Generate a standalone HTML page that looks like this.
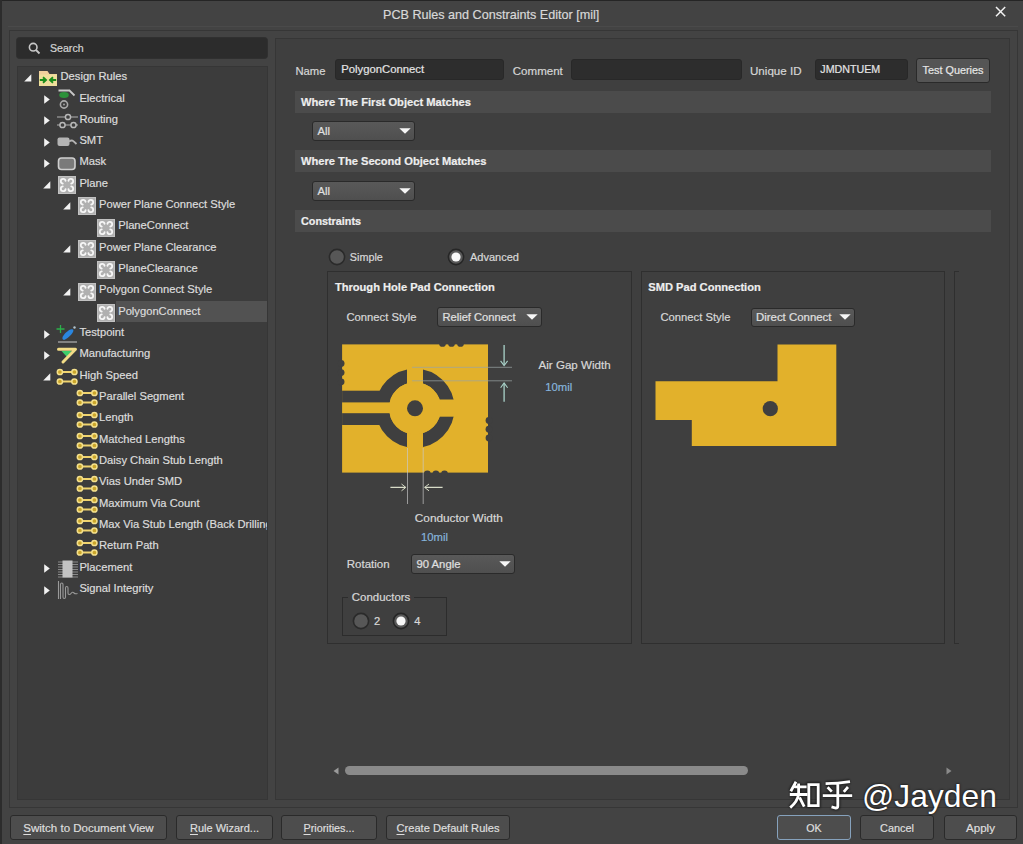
<!DOCTYPE html><html><head><meta charset="utf-8"><style>
*{box-sizing:border-box}
html,body{margin:0;padding:0}
body{width:1023px;height:844px;overflow:hidden;position:relative;background:#434343;font-family:"Liberation Sans",sans-serif;font-size:11.2px;color:#dcdcdc}
.a{position:absolute}
.t{position:absolute;white-space:nowrap;line-height:14px;-webkit-text-stroke:0.2px currentColor}
.inp{position:absolute;background:#2d2d2d;border:1px solid #282828;border-radius:3px}
.hdr{position:absolute;background:#4b4b4b}
.dd{position:absolute;border:1px solid #2a2a2a;border-radius:3px;background:linear-gradient(#595959,#4f4f4f)}
.btn{position:absolute;border:1px solid #2a2a2a;border-radius:3px;background:#4d4d4d}
svg{position:absolute;overflow:visible}
</style></head><body>
<div class="a" style="left:0;top:0;width:1023px;height:1px;background:#252525"></div>
<div class="a" style="left:0;top:0;width:2px;height:844px;background:#2c2c2c"></div>
<div class="t" style="left:383.00px;top:7.97px;font-size:12.6px;color:#d8d8d8;">PCB Rules and Constraints Editor [mil]</div>
<svg style="left:994.5px;top:5.5px" width="11" height="11" viewBox="0 0 11 11"><path d="M1 1L10.2 10.2M10.2 1L1 10.2" stroke="#f2f2f2" stroke-width="1.5"/></svg>
<div class="a" style="left:8px;top:26px;width:1010px;height:1px;background:#4a4a4a"></div>
<div class="a" style="left:9px;top:30px;width:1009px;height:778px;border:1px solid #363636"></div>
<div class="a" style="left:17px;top:38px;width:250px;height:20px;background:#2c2c2c;border-radius:3px;box-shadow:0 0 0 1px #303030"></div>
<svg style="left:28px;top:42px" width="13" height="13" viewBox="0 0 13 13"><circle cx="5.2" cy="5.2" r="3.8" fill="none" stroke="#c8c8c8" stroke-width="1.6"/><path d="M8 8L11.5 11.5" stroke="#c8c8c8" stroke-width="1.8"/></svg>
<div class="t" style="left:50.00px;top:40.97px;font-size:10.6px;color:#d4d4d4;">Search</div>
<div class="a" style="left:17px;top:66px;width:251px;height:734px;background:#3c3c3c;border:1px solid #363636"></div>
<div class="a" style="left:18px;top:67px;width:249px;height:732px;overflow:hidden">
<svg style="left:6.00px;top:7.20px" width="8" height="8" viewBox="0 0 8 8"><path d="M7.3 0.2V7.6H0.2z" fill="#f2f2f2"/></svg>
<svg style="left:20.30px;top:1.50px" width="20" height="20" viewBox="0 0 20 20"><path d="M1 2h8.5l2 3H19v12H1z" fill="#f0cf9c"/><path d="M1 5.5h18v11.5H1z" fill="#efdf9c"/><path d="M1.8 11h5.5M5 8.3l3 2.7-3 2.7M18.2 11h-5.5M15 8.3l-3 2.7 3 2.7" stroke="#1a8c1a" stroke-width="1.9" fill="none"/></svg>
<div class="t" style="left:42.50px;top:2.17px">Design Rules</div>
<svg style="left:25.90px;top:28.03px" width="6" height="9" viewBox="0 0 6 9"><path d="M0.2 0.2L5.8 4.5L0.2 8.8z" fill="#f2f2f2"/></svg>
<svg style="left:38.80px;top:22.83px" width="20" height="20" viewBox="0 0 20 20"><path d="M1.5 0.5h11l5 5" stroke="#c8c8c8" stroke-width="1.8" fill="none"/><ellipse cx="7" cy="5" rx="4.8" ry="3" fill="#2a9a3a" opacity="0.9"/><circle cx="7" cy="14.5" r="3.6" fill="none" stroke="#a8a8a8" stroke-width="1.6"/><circle cx="7" cy="14.5" r="0.9" fill="#a8a8a8"/></svg>
<div class="t" style="left:61.40px;top:23.50px">Electrical</div>
<svg style="left:25.90px;top:49.36px" width="6" height="9" viewBox="0 0 6 9"><path d="M0.2 0.2L5.8 4.5L0.2 8.8z" fill="#f2f2f2"/></svg>
<svg style="left:38.80px;top:44.16px" width="20" height="20" viewBox="0 0 20 20"><path d="M0 6h21M0 14h21" stroke="#b0b0b0" stroke-width="1.2"/><circle cx="11" cy="6" r="2.6" fill="#3c3c3c" stroke="#b8b8b8" stroke-width="1.5"/><circle cx="5.5" cy="14" r="2.6" fill="#3c3c3c" stroke="#b8b8b8" stroke-width="1.5"/><circle cx="16.5" cy="14" r="2.6" fill="#3c3c3c" stroke="#b8b8b8" stroke-width="1.5"/></svg>
<div class="t" style="left:61.40px;top:44.83px">Routing</div>
<svg style="left:25.90px;top:70.69px" width="6" height="9" viewBox="0 0 6 9"><path d="M0.2 0.2L5.8 4.5L0.2 8.8z" fill="#f2f2f2"/></svg>
<svg style="left:38.80px;top:65.49px" width="20" height="20" viewBox="0 0 20 20"><rect x="0.5" y="5.5" width="12" height="8.5" rx="2" fill="#b4b4b4"/><path d="M12 9.5c3 -2 4 -1 7.5 2.5" stroke="#b4b4b4" stroke-width="1.8" fill="none"/></svg>
<div class="t" style="left:61.40px;top:66.16px">SMT</div>
<svg style="left:25.90px;top:92.02px" width="6" height="9" viewBox="0 0 6 9"><path d="M0.2 0.2L5.8 4.5L0.2 8.8z" fill="#f2f2f2"/></svg>
<svg style="left:38.80px;top:86.82px" width="20" height="20" viewBox="0 0 20 20"><rect x="1.5" y="4" width="16.5" height="11.5" rx="3" fill="#7a7a7a" stroke="#cfcfcf" stroke-width="1.6"/></svg>
<div class="t" style="left:61.40px;top:87.49px">Mask</div>
<svg style="left:24.90px;top:113.85px" width="8" height="8" viewBox="0 0 8 8"><path d="M7.3 0.2V7.6H0.2z" fill="#f2f2f2"/></svg>
<svg style="left:38.80px;top:108.15px" width="20" height="20" viewBox="0 0 20 20"><rect x="1" y="1" width="18" height="18" fill="#b0b0b0"/><rect x="1.5" y="1.5" width="17" height="17" fill="none" stroke="#c2c2c2" stroke-width="1"/><path d="M5.78 8.56A2.4 2.4 0 1 1 8.56 5.78M8.56 14.22A2.4 2.4 0 1 1 5.78 11.44M11.44 5.78A2.4 2.4 0 1 1 14.22 8.56M14.22 11.44A2.4 2.4 0 1 1 11.44 14.22" stroke="#f6f6f6" stroke-width="1.8" fill="none" stroke-linecap="round"/></svg>
<div class="t" style="left:61.40px;top:108.82px">Plane</div>
<svg style="left:44.50px;top:135.18px" width="8" height="8" viewBox="0 0 8 8"><path d="M7.3 0.2V7.6H0.2z" fill="#f2f2f2"/></svg>
<svg style="left:58.80px;top:129.48px" width="20" height="20" viewBox="0 0 20 20"><rect x="1" y="1" width="18" height="18" fill="#b0b0b0"/><rect x="1.5" y="1.5" width="17" height="17" fill="none" stroke="#c2c2c2" stroke-width="1"/><path d="M5.78 8.56A2.4 2.4 0 1 1 8.56 5.78M8.56 14.22A2.4 2.4 0 1 1 5.78 11.44M11.44 5.78A2.4 2.4 0 1 1 14.22 8.56M14.22 11.44A2.4 2.4 0 1 1 11.44 14.22" stroke="#f6f6f6" stroke-width="1.8" fill="none" stroke-linecap="round"/></svg>
<div class="t" style="left:81.00px;top:130.15px">Power Plane Connect Style</div>
<svg style="left:78.00px;top:150.81px" width="20" height="20" viewBox="0 0 20 20"><rect x="1" y="1" width="18" height="18" fill="#b0b0b0"/><rect x="1.5" y="1.5" width="17" height="17" fill="none" stroke="#c2c2c2" stroke-width="1"/><path d="M5.78 8.56A2.4 2.4 0 1 1 8.56 5.78M8.56 14.22A2.4 2.4 0 1 1 5.78 11.44M11.44 5.78A2.4 2.4 0 1 1 14.22 8.56M14.22 11.44A2.4 2.4 0 1 1 11.44 14.22" stroke="#f6f6f6" stroke-width="1.8" fill="none" stroke-linecap="round"/></svg>
<div class="t" style="left:100.20px;top:151.48px">PlaneConnect</div>
<svg style="left:44.50px;top:177.84px" width="8" height="8" viewBox="0 0 8 8"><path d="M7.3 0.2V7.6H0.2z" fill="#f2f2f2"/></svg>
<svg style="left:58.80px;top:172.14px" width="20" height="20" viewBox="0 0 20 20"><rect x="1" y="1" width="18" height="18" fill="#b0b0b0"/><rect x="1.5" y="1.5" width="17" height="17" fill="none" stroke="#c2c2c2" stroke-width="1"/><path d="M5.78 8.56A2.4 2.4 0 1 1 8.56 5.78M8.56 14.22A2.4 2.4 0 1 1 5.78 11.44M11.44 5.78A2.4 2.4 0 1 1 14.22 8.56M14.22 11.44A2.4 2.4 0 1 1 11.44 14.22" stroke="#f6f6f6" stroke-width="1.8" fill="none" stroke-linecap="round"/></svg>
<div class="t" style="left:81.00px;top:172.81px">Power Plane Clearance</div>
<svg style="left:78.00px;top:193.47px" width="20" height="20" viewBox="0 0 20 20"><rect x="1" y="1" width="18" height="18" fill="#b0b0b0"/><rect x="1.5" y="1.5" width="17" height="17" fill="none" stroke="#c2c2c2" stroke-width="1"/><path d="M5.78 8.56A2.4 2.4 0 1 1 8.56 5.78M8.56 14.22A2.4 2.4 0 1 1 5.78 11.44M11.44 5.78A2.4 2.4 0 1 1 14.22 8.56M14.22 11.44A2.4 2.4 0 1 1 11.44 14.22" stroke="#f6f6f6" stroke-width="1.8" fill="none" stroke-linecap="round"/></svg>
<div class="t" style="left:100.20px;top:194.14px">PlaneClearance</div>
<svg style="left:44.50px;top:220.50px" width="8" height="8" viewBox="0 0 8 8"><path d="M7.3 0.2V7.6H0.2z" fill="#f2f2f2"/></svg>
<svg style="left:58.80px;top:214.80px" width="20" height="20" viewBox="0 0 20 20"><rect x="1" y="1" width="18" height="18" fill="#b0b0b0"/><rect x="1.5" y="1.5" width="17" height="17" fill="none" stroke="#c2c2c2" stroke-width="1"/><path d="M5.78 8.56A2.4 2.4 0 1 1 8.56 5.78M8.56 14.22A2.4 2.4 0 1 1 5.78 11.44M11.44 5.78A2.4 2.4 0 1 1 14.22 8.56M14.22 11.44A2.4 2.4 0 1 1 11.44 14.22" stroke="#f6f6f6" stroke-width="1.8" fill="none" stroke-linecap="round"/></svg>
<div class="t" style="left:81.00px;top:215.47px">Polygon Connect Style</div>
<div class="a" style="left:98px;top:233.83px;width:160px;height:21.5px;background:#525252"></div>
<svg style="left:78.00px;top:236.13px" width="20" height="20" viewBox="0 0 20 20"><rect x="1" y="1" width="18" height="18" fill="#b0b0b0"/><rect x="1.5" y="1.5" width="17" height="17" fill="none" stroke="#c2c2c2" stroke-width="1"/><path d="M5.78 8.56A2.4 2.4 0 1 1 8.56 5.78M8.56 14.22A2.4 2.4 0 1 1 5.78 11.44M11.44 5.78A2.4 2.4 0 1 1 14.22 8.56M14.22 11.44A2.4 2.4 0 1 1 11.44 14.22" stroke="#f6f6f6" stroke-width="1.8" fill="none" stroke-linecap="round"/></svg>
<div class="t" style="left:100.20px;top:236.80px">PolygonConnect</div>
<svg style="left:25.90px;top:262.66px" width="6" height="9" viewBox="0 0 6 9"><path d="M0.2 0.2L5.8 4.5L0.2 8.8z" fill="#f2f2f2"/></svg>
<svg style="left:38.80px;top:257.46px" width="20" height="20" viewBox="0 0 20 20"><path d="M3.5 1v8M-0.5 5h8" stroke="#2bb04a" stroke-width="1.3"/><path d="M6 15.5c-1.5-1.5 0-4 3-7s5.5-4 7-3c1.2 1.3-0.5 4-3.5 6.8s-5.2 4.4-6.5 3.2z" fill="#2a86e0"/><circle cx="17.5" cy="3.5" r="1.2" fill="#b0c4d0"/><path d="M1 18h19" stroke="#9a9a9a" stroke-width="1.5"/></svg>
<div class="t" style="left:61.40px;top:258.13px">Testpoint</div>
<svg style="left:25.90px;top:283.99px" width="6" height="9" viewBox="0 0 6 9"><path d="M0.2 0.2L5.8 4.5L0.2 8.8z" fill="#f2f2f2"/></svg>
<svg style="left:38.80px;top:278.79px" width="20" height="20" viewBox="0 0 20 20"><path d="M4.5 5l10 0l-4.5 6z" fill="#3ecf6a"/><path d="M1.5 3.2h17l-12.5 12.8" stroke="#f2dc86" stroke-width="3" fill="none" stroke-linejoin="round" stroke-linecap="round"/></svg>
<div class="t" style="left:61.40px;top:279.46px">Manufacturing</div>
<svg style="left:24.90px;top:305.82px" width="8" height="8" viewBox="0 0 8 8"><path d="M7.3 0.2V7.6H0.2z" fill="#f2f2f2"/></svg>
<svg style="left:38.80px;top:300.12px" width="20" height="20" viewBox="0 0 20 20"><path d="M2.9 5h14.5M2.9 14.5h14.5" stroke="#f0d46e" stroke-width="2.2"/><g fill="#c9a52a" stroke="#f4e08c" stroke-width="1.5"><circle cx="2.9" cy="5" r="2.6"/><circle cx="17.4" cy="5" r="2.6"/><circle cx="2.9" cy="14.5" r="2.6"/><circle cx="17.4" cy="14.5" r="2.6"/></g></svg>
<div class="t" style="left:61.40px;top:300.79px">High Speed</div>
<svg style="left:58.80px;top:321.45px" width="20" height="20" viewBox="0 0 20 20"><path d="M2.9 5h14.5M2.9 14.5h14.5" stroke="#f0d46e" stroke-width="2.2"/><g fill="#c9a52a" stroke="#f4e08c" stroke-width="1.5"><circle cx="2.9" cy="5" r="2.6"/><circle cx="17.4" cy="5" r="2.6"/><circle cx="2.9" cy="14.5" r="2.6"/><circle cx="17.4" cy="14.5" r="2.6"/></g></svg>
<div class="t" style="left:81.00px;top:322.12px">Parallel Segment</div>
<svg style="left:58.80px;top:342.78px" width="20" height="20" viewBox="0 0 20 20"><path d="M2.9 5h14.5M2.9 14.5h14.5" stroke="#f0d46e" stroke-width="2.2"/><g fill="#c9a52a" stroke="#f4e08c" stroke-width="1.5"><circle cx="2.9" cy="5" r="2.6"/><circle cx="17.4" cy="5" r="2.6"/><circle cx="2.9" cy="14.5" r="2.6"/><circle cx="17.4" cy="14.5" r="2.6"/></g></svg>
<div class="t" style="left:81.00px;top:343.45px">Length</div>
<svg style="left:58.80px;top:364.11px" width="20" height="20" viewBox="0 0 20 20"><path d="M2.9 5h14.5M2.9 14.5h14.5" stroke="#f0d46e" stroke-width="2.2"/><g fill="#c9a52a" stroke="#f4e08c" stroke-width="1.5"><circle cx="2.9" cy="5" r="2.6"/><circle cx="17.4" cy="5" r="2.6"/><circle cx="2.9" cy="14.5" r="2.6"/><circle cx="17.4" cy="14.5" r="2.6"/></g></svg>
<div class="t" style="left:81.00px;top:364.78px">Matched Lengths</div>
<svg style="left:58.80px;top:385.44px" width="20" height="20" viewBox="0 0 20 20"><path d="M2.9 5h14.5M2.9 14.5h14.5" stroke="#f0d46e" stroke-width="2.2"/><g fill="#c9a52a" stroke="#f4e08c" stroke-width="1.5"><circle cx="2.9" cy="5" r="2.6"/><circle cx="17.4" cy="5" r="2.6"/><circle cx="2.9" cy="14.5" r="2.6"/><circle cx="17.4" cy="14.5" r="2.6"/></g></svg>
<div class="t" style="left:81.00px;top:386.11px">Daisy Chain Stub Length</div>
<svg style="left:58.80px;top:406.77px" width="20" height="20" viewBox="0 0 20 20"><path d="M2.9 5h14.5M2.9 14.5h14.5" stroke="#f0d46e" stroke-width="2.2"/><g fill="#c9a52a" stroke="#f4e08c" stroke-width="1.5"><circle cx="2.9" cy="5" r="2.6"/><circle cx="17.4" cy="5" r="2.6"/><circle cx="2.9" cy="14.5" r="2.6"/><circle cx="17.4" cy="14.5" r="2.6"/></g></svg>
<div class="t" style="left:81.00px;top:407.44px">Vias Under SMD</div>
<svg style="left:58.80px;top:428.10px" width="20" height="20" viewBox="0 0 20 20"><path d="M2.9 5h14.5M2.9 14.5h14.5" stroke="#f0d46e" stroke-width="2.2"/><g fill="#c9a52a" stroke="#f4e08c" stroke-width="1.5"><circle cx="2.9" cy="5" r="2.6"/><circle cx="17.4" cy="5" r="2.6"/><circle cx="2.9" cy="14.5" r="2.6"/><circle cx="17.4" cy="14.5" r="2.6"/></g></svg>
<div class="t" style="left:81.00px;top:428.77px">Maximum Via Count</div>
<svg style="left:58.80px;top:449.43px" width="20" height="20" viewBox="0 0 20 20"><path d="M2.9 5h14.5M2.9 14.5h14.5" stroke="#f0d46e" stroke-width="2.2"/><g fill="#c9a52a" stroke="#f4e08c" stroke-width="1.5"><circle cx="2.9" cy="5" r="2.6"/><circle cx="17.4" cy="5" r="2.6"/><circle cx="2.9" cy="14.5" r="2.6"/><circle cx="17.4" cy="14.5" r="2.6"/></g></svg>
<div class="t" style="left:81.00px;top:450.10px">Max Via Stub Length (Back Drilling)</div>
<svg style="left:58.80px;top:470.76px" width="20" height="20" viewBox="0 0 20 20"><path d="M2.9 5h14.5M2.9 14.5h14.5" stroke="#f0d46e" stroke-width="2.2"/><g fill="#c9a52a" stroke="#f4e08c" stroke-width="1.5"><circle cx="2.9" cy="5" r="2.6"/><circle cx="17.4" cy="5" r="2.6"/><circle cx="2.9" cy="14.5" r="2.6"/><circle cx="17.4" cy="14.5" r="2.6"/></g></svg>
<div class="t" style="left:81.00px;top:471.43px">Return Path</div>
<svg style="left:25.90px;top:497.29px" width="6" height="9" viewBox="0 0 6 9"><path d="M0.2 0.2L5.8 4.5L0.2 8.8z" fill="#f2f2f2"/></svg>
<svg style="left:38.80px;top:492.09px" width="20" height="20" viewBox="0 0 20 20"><path d="M1 3h20M1 5.5h20M1 8h20M1 10.5h20M1 13h20M1 15.5h20M1 18h20" stroke="#8a8a8a" stroke-width="1"/><rect x="5.5" y="1.5" width="10" height="17" fill="#c4c4c4"/></svg>
<div class="t" style="left:61.40px;top:492.76px">Placement</div>
<svg style="left:25.90px;top:518.62px" width="6" height="9" viewBox="0 0 6 9"><path d="M0.2 0.2L5.8 4.5L0.2 8.8z" fill="#f2f2f2"/></svg>
<svg style="left:38.80px;top:513.42px" width="20" height="20" viewBox="0 0 20 20"><path d="M1.5 19V1M3.5 19V4.5c0-2 2.5-2 2.5 0V17c0 2 2.5 2 2.5 0V8c0-2 2.5-2 2.5 0v5c0 2 2 2 3 0.5s2-1.5 3-0.5 2 1 3.5 0.5" stroke="#9a9a9a" stroke-width="1.1" fill="none"/></svg>
<div class="t" style="left:61.40px;top:514.09px">Signal Integrity</div>
</div>
<div class="a" style="left:275px;top:38px;width:735px;height:762px;background:#3f3f3f;border:1px solid #363636"></div>
<div class="t" style="left:295.40px;top:63.67px;font-size:11.25px;color:#d6d6d6;">Name</div>
<div class="inp" style="left:335px;top:59px;width:169px;height:21px"></div>
<div class="t" style="left:341.20px;top:61.97px;font-size:11.31px;color:#e4e4e4;">PolygonConnect</div>
<div class="t" style="left:512.80px;top:63.97px;font-size:11.54px;color:#d6d6d6;">Comment</div>
<div class="inp" style="left:571px;top:59px;width:171px;height:21px"></div>
<div class="t" style="left:750.00px;top:63.97px;font-size:11.6px;color:#d6d6d6;">Unique ID</div>
<div class="inp" style="left:815px;top:59px;width:93px;height:21px"></div>
<div class="t" style="left:820.30px;top:61.97px;font-size:10.69px;color:#e4e4e4;">JMDNTUEM</div>
<div class="btn" style="left:916px;top:58px;width:74px;height:25px;background:#555555;border-color:#2a2a2a"></div>
<div class="t" style="left:922.50px;top:62.97px;font-size:10.87px;color:#e6e6e6;">Test Queries</div>
<div class="hdr" style="left:295px;top:91px;width:696px;height:22px"></div>
<div class="t" style="left:301.00px;top:94.97px;font-size:11.17px;font-weight:bold;color:#eeeeee;">Where The First Object Matches</div>
<div class="dd" style="left:312px;top:121px;width:103px;height:20px"></div>
<div class="t" style="left:317.50px;top:123.67px;font-size:11.2px;color:#e0e0e0;">All</div>
<svg style="left:399px;top:127.80px" width="12" height="6" viewBox="0 0 12 6"><path d="M0.3 0.2H11.7L6 5.8z" fill="#f6f6f6"/></svg>
<div class="hdr" style="left:295px;top:150px;width:696px;height:22px"></div>
<div class="t" style="left:301.00px;top:153.97px;font-size:11.13px;font-weight:bold;color:#eeeeee;">Where The Second Object Matches</div>
<div class="dd" style="left:312px;top:181px;width:103px;height:20px"></div>
<div class="t" style="left:317.50px;top:183.67px;font-size:11.2px;color:#e0e0e0;">All</div>
<svg style="left:399px;top:187.80px" width="12" height="6" viewBox="0 0 12 6"><path d="M0.3 0.2H11.7L6 5.8z" fill="#f6f6f6"/></svg>
<div class="hdr" style="left:295px;top:210px;width:696px;height:22px"></div>
<div class="t" style="left:301.00px;top:213.97px;font-size:10.8px;font-weight:bold;color:#eeeeee;">Constraints</div>
<svg style="left:327.5px;top:247.5px" width="18" height="18" viewBox="0 0 18 18"><circle cx="9" cy="9" r="7.6" fill="#575757" stroke="#2a2a2a" stroke-width="1.6"/></svg>
<div class="t" style="left:349.80px;top:249.97px;font-size:10.8px;color:#d8d8d8;">Simple</div>
<svg style="left:447.2px;top:247.5px" width="18" height="18" viewBox="0 0 18 18"><circle cx="9" cy="9" r="7.6" fill="#5a5a5a" stroke="#262626" stroke-width="1.6"/><circle cx="9" cy="9" r="4.6" fill="#f8f8f8"/></svg>
<div class="t" style="left:470.00px;top:249.97px;font-size:11.02px;color:#d8d8d8;">Advanced</div>
<div class="a" style="left:327px;top:271px;width:305px;height:373px;border:1px solid #2f2f2f"></div>
<div class="a" style="left:640.5px;top:271px;width:304.5px;height:373px;border:1px solid #2f2f2f"></div>
<div class="a" style="left:953.5px;top:271px;width:5px;height:373px;border-left:1px solid #2f2f2f;border-top:1px solid #2f2f2f;border-bottom:1px solid #2f2f2f"></div>
<div class="t" style="left:334.90px;top:280.27px;font-size:11.12px;font-weight:bold;color:#eeeeee;">Through Hole Pad Connection</div>
<div class="t" style="left:346.50px;top:309.97px;font-size:11.24px;color:#d8d8d8;">Connect Style</div>
<div class="dd" style="left:437px;top:307px;width:105px;height:20px"></div>
<div class="t" style="left:442.50px;top:309.67px;font-size:11.13px;color:#e0e0e0;">Relief Connect</div>
<svg style="left:526px;top:313.80px" width="12" height="6" viewBox="0 0 12 6"><path d="M0.3 0.2H11.7L6 5.8z" fill="#f6f6f6"/></svg>
<div class="t" style="left:538.60px;top:358.47px;font-size:11.57px;color:#d8d8d8;">Air Gap Width</div>
<div class="t" style="left:545.30px;top:380.27px;font-size:11.3px;color:#86b4dc;">10mil</div>
<div class="t" style="left:414.80px;top:511.47px;font-size:11.82px;color:#d8d8d8;">Conductor Width</div>
<div class="t" style="left:421.00px;top:530.27px;font-size:11.3px;color:#86b4dc;">10mil</div>
<div class="t" style="left:346.70px;top:557.47px;font-size:11.54px;color:#d8d8d8;">Rotation</div>
<div class="dd" style="left:411px;top:554px;width:104px;height:20px"></div>
<div class="t" style="left:416.50px;top:556.67px;font-size:11.3px;color:#e0e0e0;">90 Angle</div>
<svg style="left:499px;top:560.80px" width="12" height="6" viewBox="0 0 12 6"><path d="M0.3 0.2H11.7L6 5.8z" fill="#f6f6f6"/></svg>
<div class="a" style="left:341.5px;top:597px;width:105px;height:39px;border:1px solid #2c2c2c"></div>
<div class="a" style="left:348px;top:590px;width:66px;height:12px;background:#3f3f3f"></div>
<div class="t" style="left:351.80px;top:590.27px;font-size:11.44px;color:#d8d8d8;">Conductors</div>
<svg style="left:351.5px;top:611.5px" width="18" height="18" viewBox="0 0 18 18"><circle cx="9" cy="9" r="7.6" fill="#575757" stroke="#2a2a2a" stroke-width="1.6"/></svg>
<div class="t" style="left:374.00px;top:613.97px;font-size:11.2px;color:#d8d8d8;">2</div>
<svg style="left:392.2px;top:611.5px" width="18" height="18" viewBox="0 0 18 18"><circle cx="9" cy="9" r="7.6" fill="#5a5a5a" stroke="#262626" stroke-width="1.6"/><circle cx="9" cy="9" r="4.6" fill="#f8f8f8"/></svg>
<div class="t" style="left:414.20px;top:613.97px;font-size:11.2px;color:#d8d8d8;">4</div>
<svg style="left:0;top:0" width="1023" height="844"><rect x="342.1" y="344.4" width="145.9" height="128.2" fill="#e2b12b"/><circle cx="415" cy="408.3" r="32.8" fill="none" stroke="#3f3f3f" stroke-width="13.4"/><rect x="342.1" y="390.7" width="48" height="34.3" fill="#3f3f3f"/><rect x="342.1" y="402.4" width="50" height="10.8" fill="#e2b12b"/><rect x="407" y="366" width="16" height="20" fill="#e2b12b"/><rect x="407" y="430" width="16" height="20" fill="#e2b12b"/><rect x="438" y="399.5" width="20" height="17.2" fill="#e2b12b"/><circle cx="415" cy="408.3" r="26" fill="#e2b12b"/><circle cx="415" cy="408.3" r="8" fill="#3f3f3f"/><circle cx="442.50" cy="343.40" r="3.4" fill="#3f3f3f"/><circle cx="451.50" cy="343.40" r="3.4" fill="#3f3f3f"/><circle cx="460.50" cy="343.40" r="3.4" fill="#3f3f3f"/><circle cx="427.30" cy="473.80" r="3.4" fill="#3f3f3f"/><circle cx="435.90" cy="473.80" r="3.4" fill="#3f3f3f"/><circle cx="444.50" cy="473.80" r="3.4" fill="#3f3f3f"/><circle cx="341.10" cy="363.40" r="3.4" fill="#3f3f3f"/><circle cx="341.10" cy="372.60" r="3.4" fill="#3f3f3f"/><circle cx="341.10" cy="381.80" r="3.4" fill="#3f3f3f"/><circle cx="489.00" cy="420.40" r="3.4" fill="#3f3f3f"/><circle cx="489.00" cy="429.20" r="3.4" fill="#3f3f3f"/><circle cx="489.00" cy="438.00" r="3.4" fill="#3f3f3f"/><path d="M412 367.3H512M412 380.8H512" stroke="#9aa4a4" stroke-width="0.9" opacity="0.8"/><path d="M407.5 448V504M423.2 448V504" stroke="#c8c8c8" stroke-width="0.9" opacity="0.75"/><path d="M504.1 345V365M504.1 383.5V401.8" stroke="#a9d2c9" stroke-width="1.3"/><path d="M500.6 360.8L504.1 365.5L507.6 360.8M500.6 387.8L504.1 383L507.6 387.8" stroke="#a9d2c9" stroke-width="1.1" fill="none"/><path d="M390.4 487.4H405.5M424.8 487.4H442.6" stroke="#d8dcc8" stroke-width="1.1"/><path d="M401.5 484L405.8 487.4L401.5 490.8M429 484L424.6 487.4L429 490.8" stroke="#d8dcc8" stroke-width="1" fill="none"/></svg>
<div class="t" style="left:648.30px;top:280.37px;font-size:11.13px;font-weight:bold;color:#eeeeee;">SMD Pad Connection</div>
<div class="t" style="left:660.50px;top:310.17px;font-size:11.24px;color:#d8d8d8;">Connect Style</div>
<div class="dd" style="left:750.5px;top:307.5px;width:104.5px;height:19.5px"></div>
<div class="t" style="left:756.00px;top:309.92px;font-size:11.42px;color:#e0e0e0;">Direct Connect</div>
<svg style="left:839px;top:314.05px" width="12" height="6" viewBox="0 0 12 6"><path d="M0.3 0.2H11.7L6 5.8z" fill="#f6f6f6"/></svg>
<svg style="left:0;top:0" width="1023" height="844"><path d="M655.5 381.2H777.5V344.6H836.3V446H691.8V420.1H655.5z" fill="#e2b12b"/><circle cx="770.3" cy="408.7" r="7.6" fill="#3f3f3f"/></svg>
<div class="a" style="left:345px;top:766px;width:403px;height:9px;background:#8a8a8a;border-radius:4.5px"></div>
<svg style="left:333px;top:766.5px" width="6" height="8" viewBox="0 0 6 8"><path d="M5.5 0.5V7.5L0.5 4z" fill="#9a9a9a"/></svg>
<svg style="left:945.5px;top:766.5px" width="6" height="8" viewBox="0 0 6 8"><path d="M0.5 0.5V7.5L5.5 4z" fill="#8a8a8a"/></svg>
<div class="btn" style="left:10px;top:815px;width:157px;height:25px;"></div>
<div class="t" style="left:10px;top:820.97px;width:157px;text-align:center;color:#dedede;font-size:11.53px"><span style="text-decoration:underline;text-underline-offset:1.5px">S</span>witch to Document View</div>
<div class="btn" style="left:176px;top:815px;width:97px;height:25px;"></div>
<div class="t" style="left:176px;top:820.97px;width:97px;text-align:center;color:#dedede;font-size:10.99px"><span style="text-decoration:underline;text-underline-offset:1.5px">R</span>ule Wizard...</div>
<div class="btn" style="left:281px;top:815px;width:96px;height:25px;"></div>
<div class="t" style="left:281px;top:820.97px;width:96px;text-align:center;color:#dedede;font-size:10.8px"><span style="text-decoration:underline;text-underline-offset:1.5px">P</span>riorities...</div>
<div class="btn" style="left:386px;top:815px;width:124px;height:25px;"></div>
<div class="t" style="left:386px;top:820.97px;width:124px;text-align:center;color:#dedede;font-size:11.1px"><span style="text-decoration:underline;text-underline-offset:1.5px">C</span>reate Default Rules</div>
<div class="btn" style="left:777px;top:815px;width:74px;height:25px;border-color:#86a2bd;"></div>
<div class="t" style="left:777px;top:820.97px;width:74px;text-align:center;color:#dedede;font-size:10.66px">OK</div>
<div class="btn" style="left:860px;top:815px;width:74px;height:25px;"></div>
<div class="t" style="left:860px;top:820.97px;width:74px;text-align:center;color:#dedede;font-size:10.92px">Cancel</div>
<div class="btn" style="left:944px;top:815px;width:73px;height:25px;"></div>
<div class="t" style="left:944px;top:820.97px;width:73px;text-align:center;color:#dedede;font-size:11.59px">Apply</div>
<svg style="left:0;top:0" width="1023" height="844"><defs><filter id="sh" x="-20%" y="-20%" width="140%" height="140%"><feGaussianBlur stdDeviation="1.2"/></filter></defs><path d="M796 781.8L790.8 791.2M794.6 786.9H806.6M789.8 794.5H807.2M798.6 783.5V794.5Q797.5 801.5 790.2 807.6M799.6 797.5L804.2 806.6M808.8 784.6H818.2V805.6H808.8ZM850 781.6Q838 783.4 825.6 783.6M827.6 787.2L831.8 791.6M848 787L843.8 791.8M822.8 795.6H852.2M837.8 784.5V806Q837.8 808 835.8 808L831.5 806.8" stroke="#000" stroke-opacity="0.55" stroke-width="5" fill="none" filter="url(#sh)"/><path d="M796 781.8L790.8 791.2M794.6 786.9H806.6M789.8 794.5H807.2M798.6 783.5V794.5Q797.5 801.5 790.2 807.6M799.6 797.5L804.2 806.6M808.8 784.6H818.2V805.6H808.8ZM850 781.6Q838 783.4 825.6 783.6M827.6 787.2L831.8 791.6M848 787L843.8 791.8M822.8 795.6H852.2M837.8 784.5V806Q837.8 808 835.8 808L831.5 806.8" stroke="#ffffff" stroke-width="2.8" fill="none" stroke-linecap="butt"/></svg>
<div class="t" style="left:862px;top:776px;font-size:31.8px;line-height:40px;color:#fff;-webkit-text-stroke:0;text-shadow:0 0 2px rgba(0,0,0,0.7),0 0 3px rgba(0,0,0,0.4)">@Jayden</div>
</body></html>
